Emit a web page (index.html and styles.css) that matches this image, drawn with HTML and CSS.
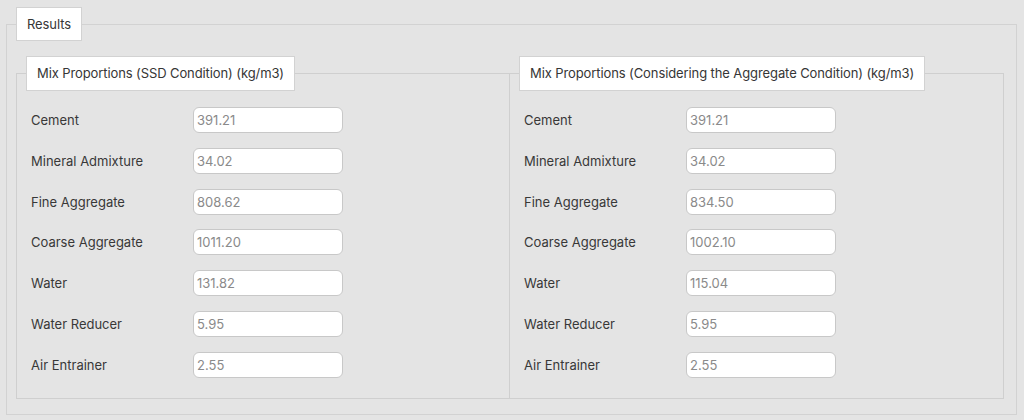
FILE: index.html
```html
<!DOCTYPE html>
<html>
<head>
<meta charset="utf-8">
<link rel="stylesheet" href="styles.css">
</head>
<body>
<fieldset class="results">
  <legend class="box-legend">Results</legend>
  <div class="columns">
    <fieldset class="group">
      <legend class="box-legend">Mix Proportions (SSD Condition) (kg/m3)</legend>
      <div class="rows">
        <div class="row"><span class="label">Cement</span><input class="value" type="text" value="391.21" readonly></div>
        <div class="row"><span class="label">Mineral Admixture</span><input class="value" type="text" value="34.02" readonly></div>
        <div class="row"><span class="label">Fine Aggregate</span><input class="value" type="text" value="808.62" readonly></div>
        <div class="row"><span class="label">Coarse Aggregate</span><input class="value" type="text" value="1011.20" readonly></div>
        <div class="row"><span class="label">Water</span><input class="value" type="text" value="131.82" readonly></div>
        <div class="row"><span class="label">Water Reducer</span><input class="value" type="text" value="5.95" readonly></div>
        <div class="row"><span class="label">Air Entrainer</span><input class="value" type="text" value="2.55" readonly></div>
      </div>
    </fieldset>
    <fieldset class="group">
      <legend class="box-legend">Mix Proportions (Considering the Aggregate Condition) (kg/m3)</legend>
      <div class="rows">
        <div class="row"><span class="label">Cement</span><input class="value" type="text" value="391.21" readonly></div>
        <div class="row"><span class="label">Mineral Admixture</span><input class="value" type="text" value="34.02" readonly></div>
        <div class="row"><span class="label">Fine Aggregate</span><input class="value" type="text" value="834.50" readonly></div>
        <div class="row"><span class="label">Coarse Aggregate</span><input class="value" type="text" value="1002.10" readonly></div>
        <div class="row"><span class="label">Water</span><input class="value" type="text" value="115.04" readonly></div>
        <div class="row"><span class="label">Water Reducer</span><input class="value" type="text" value="5.95" readonly></div>
        <div class="row"><span class="label">Air Entrainer</span><input class="value" type="text" value="2.55" readonly></div>
      </div>
    </fieldset>
  </div>
</fieldset>
</body>
</html>
```
FILE: styles.css
```css
html, body {
  margin: 0;
  padding: 0;
  background: #e4e4e4;
}
body {
  font-family: Inter, "Liberation Sans", sans-serif;
  font-size: 13px;
  color: #383838;
  padding: 7px 7px 0 6px;
}
fieldset {
  margin: 0;
  min-width: 0;
}
.results {
  border: 1px solid #d2d2d2;
  padding: 15px 11px 15px 9px;
}
.box-legend {
  background: #fff;
  border: 1px solid #d2d2d2;
  padding: 0 10px;
  line-height: 32px;
  color: #363636;
  letter-spacing: -0.1px;
}
.group .box-legend {
  line-height: 33px;
}
.columns {
  display: grid;
  grid-template-columns: 494px 494px;
}
.group {
  border: 1px solid #cfcfcf;
  padding: 16px 9px 20px 9px;
}
.group + .group {
  margin-left: -1px;
}
.rows {
  display: flex;
  flex-direction: column;
  gap: 14.8px;
}
.row {
  display: flex;
  align-items: center;
  height: 26px;
}
.label {
  width: 167px;
  padding-left: 5px;
  flex: none;
  box-sizing: border-box;
}
.value {
  width: 150px;
  height: 26px;
  box-sizing: border-box;
  border: 1px solid #c8c8c8;
  border-radius: 6px;
  background: #fff;
  padding: 0 3px;
  font-family: Inter, "Liberation Sans", sans-serif;
  font-size: 13px;
  color: #8a8a8a;
  outline: none;
}
```
